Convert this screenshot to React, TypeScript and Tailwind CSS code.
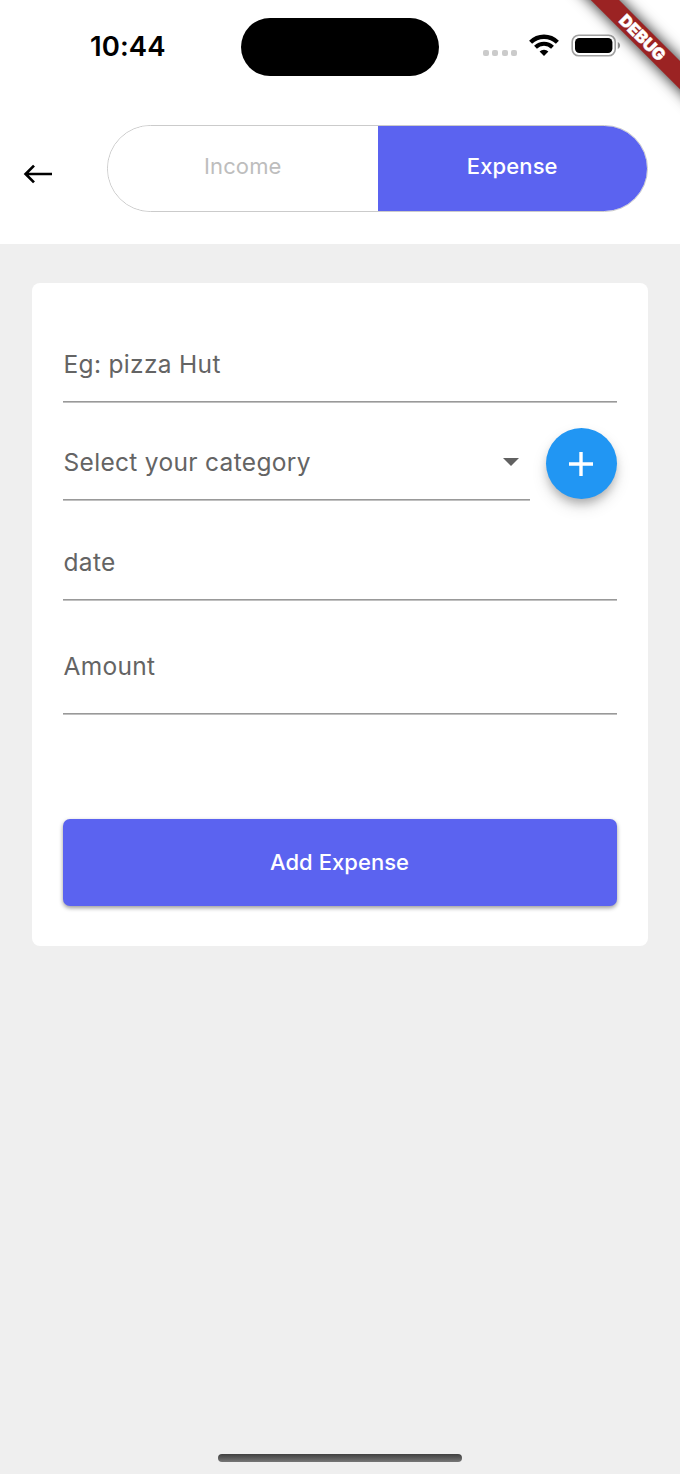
import { useState } from "react";
import type { ReactNode } from "react";

type EntryType = "Income" | "Expense";

const StatusBar = () => (
  <div className="flex h-[93px] items-start">
    <div className="flex w-[241px] pt-[29px] pl-[90px]">
      <span className="text-[27.5px] leading-[34px] font-semibold tracking-[0.1px]">
        10:44
      </span>
    </div>
    <div className="mt-[18px] h-[58px] w-[198px] rounded-full bg-black" />
    <div className="flex items-center pt-[34px] pl-[43.5px]">
      <div className="mt-[14px] flex gap-[3.5px]">
        <span className="size-[6px] rounded-[2px] bg-[#cbcbcb]" />
        <span className="size-[6px] rounded-[2px] bg-[#cbcbcb]" />
        <span className="size-[6px] rounded-[2px] bg-[#cbcbcb]" />
        <span className="size-[6px] rounded-[2px] bg-[#cbcbcb]" />
      </div>
      <svg
        className="mb-[2px] ml-[12px] h-[22px] w-[30px]"
        viewBox="0 0 30 22"
        fill="none"
        stroke="#000"
      >
        <path d="M1.6 8.2A19.2 19.2 0 0 1 28.4 8.2" strokeWidth="4.3" />
        <path d="M6.5 13.2A12.3 12.3 0 0 1 23.5 13.2" strokeWidth="4.1" />
        <path
          d="M15 22l-4.4-4.4a6.2 6.2 0 0 1 8.8 0z"
          fill="#000"
          stroke="none"
        />
      </svg>
      <svg className="ml-[12px] h-[24px] w-[50px]" viewBox="0 0 50 24">
        <rect
          x="1.2"
          y="1.2"
          width="43"
          height="20.6"
          rx="6.6"
          fill="none"
          stroke="#a0a0a0"
          strokeWidth="1.6"
        />
        <rect x="4" y="4" width="37.4" height="15" rx="4.4" fill="#000" />
        <path d="M46.8 8c3 1.4 3 5.6 0 7z" fill="#909090" />
      </svg>
    </div>
  </div>
);

const DebugBanner = () => (
  <div className="pointer-events-none absolute top-0 right-0 size-[160px] overflow-hidden">
    <div className="absolute top-[27.5px] left-[-27px] flex h-[19.5px] w-[300px] rotate-45 items-center justify-center bg-[#9b2323] shadow-[0_0_14px_1px_rgba(0,0,0,0.8)]">
      <span className="pr-[1px] text-[16.5px] leading-none font-black text-white [-webkit-text-stroke:0.4px_white]">
        DEBUG
      </span>
    </div>
  </div>
);

interface FieldProps {
  className: string;
  children: ReactNode;
}

const Field = ({ className, children }: FieldProps) => (
  <div
    className={`flex items-end border-b border-[#999999] pl-[0.5px] text-[24.5px] leading-[30px] font-normal tracking-[0.32px] text-[#646464] shadow-[0_1px_0_#c0c0c0] ${className}`}
  >
    {children}
  </div>
);

const App = () => {
  const [type, setType] = useState<EntryType>("Expense");

  const tabClass = (tab: EntryType) =>
    tab === type
      ? "bg-[#5b63f0] text-white font-medium"
      : "bg-white text-[#bdbdbd] font-normal";

  return (
    <div className="relative flex h-[1474px] w-[680px] flex-col overflow-hidden bg-[#efefef] font-['Inter',sans-serif] text-black">
      <header className="h-[244px] bg-white">
        <StatusBar />
        <div className="flex items-center pt-[32px] pl-[23px]">
          <button aria-label="Back" className="mt-[10px]">
            <svg
              className="h-[20px] w-[30px]"
              viewBox="0 0 30 20"
              fill="none"
              stroke="#000"
              strokeWidth="2.7"
            >
              <path d="M2.5 10H29M11 1.6L2.6 10l8.4 8.4" />
            </svg>
          </button>
          <div className="ml-[54px] flex h-[87px] w-[541px] overflow-hidden rounded-full border border-[#cbcbcb]">
            {(["Income", "Expense"] as const).map((tab) => (
              <button
                key={tab}
                className={`flex-1 pb-[4px] text-[22px] tracking-[0.1px] ${tabClass(tab)}`}
                onClick={() => setType(tab)}
              >
                {tab}
              </button>
            ))}
          </div>
        </div>
      </header>

      <main className="mx-8 mt-[39px] h-[663px] rounded-[8px] bg-white px-[31px]">
        <Field className="h-[119px] pb-[22px]">Eg: pizza Hut</Field>
        <div className="flex h-[98px] items-end justify-between">
          <Field className="h-[98px] w-[467px] justify-between pr-[11px] pb-[22px]">
            <span>Select your category</span>
            <svg className="mb-[11px] h-[8px] w-[16px]" viewBox="0 0 16 8">
              <path d="M0 0h16L8 8z" fill="#616161" />
            </svg>
          </Field>
          <button
            aria-label="Add category"
            className="mr-[0.5px] mb-[1px] flex size-[71px] items-center justify-center rounded-full bg-[#2196f3] shadow-[0_6px_10px_-2px_rgba(0,0,0,0.25),0_8px_16px_rgba(0,0,0,0.12)]"
          >
            <svg className="mr-[1px] size-[24px]" viewBox="0 0 24 24">
              <path d="M12 0v24M0 12h24" stroke="#fff" strokeWidth="3.4" />
            </svg>
          </button>
        </div>
        <Field className="h-[100px] pb-[22px]">date</Field>
        <Field className="h-[114px] pb-[32px]">Amount</Field>
        <button className="mt-[105px] h-[87px] w-full rounded-[7px] bg-[#5b63f0] pr-[1px] text-[22px] font-medium tracking-[0.05px] text-white shadow-[0_2px_4px_rgba(0,0,0,0.4)]">
          Add {type}
        </button>
      </main>

      <div className="mx-auto mt-auto mb-[12.5px] h-[8px] w-[244px] rounded-full bg-gradient-to-b from-[#404040] to-[#777777]" />
      <DebugBanner />
    </div>
  );
};

export default App;
